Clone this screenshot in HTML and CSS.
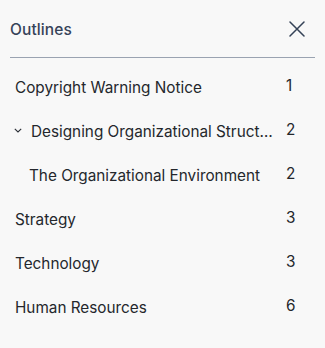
FILE: index.html
```html
<!DOCTYPE html>
<html lang="en">
<head>
<meta charset="utf-8">
<title>Outlines</title>
<link rel="stylesheet" href="styles.css">
</head>
<body>
<div class="panel">
  <div class="header">
    <span class="title">Outlines</span>
    <button class="close" aria-label="Close">
      <svg width="16" height="16" viewBox="0 0 16 16"><path d="M1 1 L15 15 M15 1 L1 15" stroke="#354257" stroke-width="1.5" fill="none" stroke-linecap="round"/></svg>
    </button>
  </div>
  <ul class="list">
    <li class="row"><span class="name">Copyright Warning Notice</span><span class="page">1</span></li>
    <li class="row row-parent"><svg class="chev" width="8" height="5" viewBox="0 0 8 5"><path d="M0.8 0.8 L4 4 L7.2 0.8" stroke="#2a2e35" stroke-width="1.1" fill="none"/></svg><span class="name">Designing Organizational Structure: Basic Organizing Concepts</span><span class="page">2</span></li>
    <li class="row row-child"><span class="name">The Organizational Environment</span><span class="page">2</span></li>
    <li class="row"><span class="name">Strategy</span><span class="page">3</span></li>
    <li class="row"><span class="name">Technology</span><span class="page">3</span></li>
    <li class="row"><span class="name">Human Resources</span><span class="page">6</span></li>
  </ul>
</div>
</body>
</html>
```
FILE: styles.css
```css
html, body {
  margin: 0;
  padding: 0;
  background: #f8f8f8;
}
body {
  font-family: Inter, "Noto Sans", sans-serif;
  width: 325px;
  height: 348px;
  overflow: hidden;
}
.panel {
  padding: 0 10px;
}
.header {
  display: flex;
  align-items: flex-start;
  justify-content: space-between;
  border-bottom: 1px solid #9aa3b1;
  box-sizing: border-box;
  height: 58px;
}
.title {
  margin-top: 20px;
  font-size: 15.5px;
  letter-spacing: 0.1px;
  line-height: 20px;
  color: #364359;
  font-weight: 500;
}
.close {
  margin-top: 21px;
  margin-right: 10px;
  padding: 0;
  border: 0;
  background: none;
  width: 16px;
  height: 16px;
  display: block;
}
.close svg { display: block; }
.list {
  list-style: none;
  margin: 8px 0 0 0;
  padding: 0;
}
.row {
  height: 44px;
  display: flex;
  align-items: center;
  padding: 0 19px 0 5px;
  font-size: 15.3px;
  line-height: 20px;
  color: #24272c;
}
.name {
  flex: 1;
  min-width: 0;
  white-space: nowrap;
  overflow: hidden;
  text-overflow: ellipsis;
  margin-right: 10px;
}
.page {
  width: 10px;
  flex: none;
  text-align: left;
  position: relative;
  top: -2px;
}
.row-parent {
  padding-left: 4px;
}
.chev {
  display: block;
  margin-right: 9px;
  margin-top: -3px;
  flex: none;
}
.row-child {
  padding-left: 19px;
}
```
